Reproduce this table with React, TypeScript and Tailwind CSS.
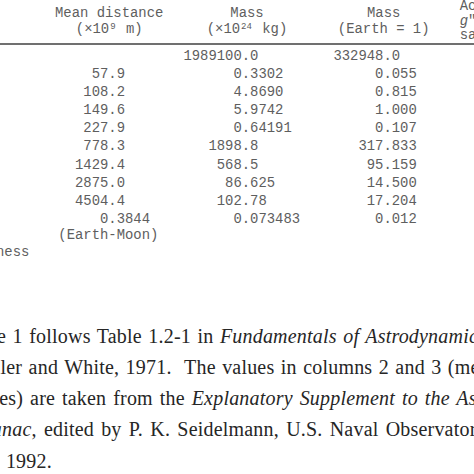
import React from "react";

const pad = (cells: [number, string][]) => {
  let s = "";
  for (const [i, t] of cells) {
    s = s.padEnd(i, " ") + t;
  }
  return s;
};

const rows: [number, string][][] = [
  [[22, "1989100.0"], [40, "332948.0"]],
  [[11, "57.9"], [28, "0.3302"], [45, "0.055"]],
  [[10, "108.2"], [28, "4.8690"], [45, "0.815"]],
  [[10, "149.6"], [28, "5.9742"], [45, "1.000"]],
  [[10, "227.9"], [28, "0.64191"], [45, "0.107"]],
  [[10, "778.3"], [25, "1898.8"], [43, "317.833"]],
  [[9, "1429.4"], [26, "568.5"], [44, "95.159"]],
  [[9, "2875.0"], [27, "86.625"], [44, "14.500"]],
  [[9, "4504.4"], [26, "102.78"], [44, "17.204"]],
  [[12, "0.3844"], [28, "0.073483"], [45, "0.012"]],
];

export default function App() {
  return (
    <div className="w-[474px] h-[474px] overflow-hidden bg-white">
      <div className="font-['Liberation_Mono',monospace] text-[13.9px] text-[#5e5e5e]">
        <div className="flex h-[43px] whitespace-nowrap">
          <div className="w-[40px] shrink-0" />
          <div className="w-[138.4px] shrink-0 pt-[5px] text-center leading-[16px]">
            <div>Mean distance</div>
            <div>
              (×10<sup className="text-[9px] ml-[1px] mr-[2px]">9</sup> m)
            </div>
          </div>
          <div className="w-[137.2px] shrink-0 pt-[5px] text-center leading-[16px]">
            <div>Mass</div>
            <div>
              (×10<sup className="text-[9px] ml-[1px] mr-[2px]">24</sup> kg)
            </div>
          </div>
          <div className="w-[136.2px] shrink-0 pt-[5px] text-center leading-[16px]">
            <div>Mass</div>
            <div>(Earth = 1)</div>
          </div>
          <div className="shrink-0 pl-[8px] mt-[-1px] leading-[14.5px]">
            <div>Acceleration</div>
            <div>
              <i>g</i>" at
            </div>
            <div>sa</div>
          </div>
        </div>
        <div className="h-[2px] w-full bg-[#707070]" />
        <div className="mt-[2px] whitespace-pre leading-[18.1px]">
          {rows.map((r, i) => (
            <div key={i}>{pad(r)}</div>
          ))}
        </div>
        <div className="mt-[-1px] whitespace-pre leading-[16px]">
          {pad([[7, "(Earth-Moon)"]])}
        </div>
        <div className="-ml-1 whitespace-pre leading-[18.1px]">ness</div>
      </div>

      <div className="mt-[59.5px] font-['Liberation_Serif',serif] text-[20px] leading-[31.25px] tracking-[0.2px] text-[#262626] whitespace-pre">
        <div className="ml-[-39px] [word-spacing:1.26px]">
          Table 1 follows Table 1.2-1 in <i>Fundamentals of Astrodynamics</i>
        </div>
        <div className="ml-[-42.5px] [word-spacing:1.2px]">
          {"Mueller and White, 1971.  The values in columns 2 and 3 (mean"}
        </div>
        <div className="ml-[-36px] [word-spacing:1.7px]">
          values) are taken from the <i>Explanatory Supplement to the Astronomical</i>
        </div>
        <div className="ml-[-41px] [word-spacing:2px]">
          <i>Almanac</i>, edited by P. K. Seidelmann, U.S. Naval Observatory,
        </div>
        <div className="ml-[-32.7px]">CA, 1992.</div>
      </div>
    </div>
  );
}
